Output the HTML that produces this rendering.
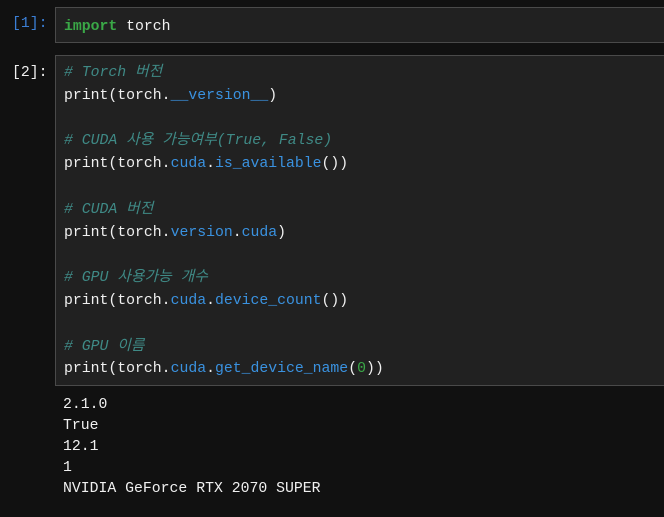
<!DOCTYPE html>
<html><head><meta charset="utf-8"><style>
body{margin:0;background:#111111;width:664px;height:517px;overflow:hidden;font-family:"Liberation Mono","Noto Sans CJK KR",monospace;font-size:14.8px;color:#f0f0f0}
.cell{position:absolute;left:55px;right:-2px;background:#212121;border:1px solid #4a4a4a}
.p{position:absolute;left:12px;font-size:14.8px}
pre{margin:0;font:inherit;white-space:pre}
.c{color:#3f8a86;font-style:italic}
.k{color:#3aa847;font-weight:bold}
.b{color:#3a92e0}
.n{color:#3aa847}
</style></head><body>
<div class="p" style="top:16px;color:#3b7fd6">[1]:</div>
<div class="cell" style="top:7px;height:34px"><pre style="position:absolute;left:8px;top:9px;line-height:20px"><span class="k">import</span> torch</pre></div>
<div class="p" style="top:65px;color:#f0f0f0">[2]:</div>
<div class="cell" style="top:55px;height:329px"><pre style="position:absolute;left:8px;top:6px;line-height:22.8px"><span class="c"># Torch 버전</span>
print(torch.<span class="b">__version__</span>)

<span class="c"># CUDA 사용 가능여부(True, False)</span>
print(torch.<span class="b">cuda</span>.<span class="b">is_available</span>())

<span class="c"># CUDA 버전</span>
print(torch.<span class="b">version</span>.<span class="b">cuda</span>)

<span class="c"># GPU 사용가능 개수</span>
print(torch.<span class="b">cuda</span>.<span class="b">device_count</span>())

<span class="c"># GPU 이름</span>
print(torch.<span class="b">cuda</span>.<span class="b">get_device_name</span>(<span class="n">0</span>))</pre></div>
<pre style="position:absolute;left:63px;top:395px;line-height:21px">2.1.0
True
12.1
1
NVIDIA GeForce RTX 2070 SUPER</pre>
</body></html>
